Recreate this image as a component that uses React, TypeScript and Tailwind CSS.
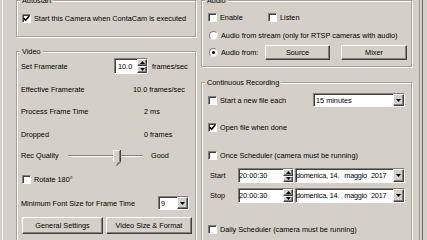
import React from 'react';

const sunken =
  'bg-white border border-t-[#808080] border-l-[#808080] border-b-white border-r-white shadow-[inset_1px_1px_0_#404040]';
const raised =
  'bg-[#d4d0c8] border border-t-white border-l-white border-r-[#404040] border-b-[#404040] shadow-[inset_-1px_-1px_0_#808080]';

const Arrow = ({ up }: { up?: boolean }) => (
  <svg width="5" height="3" viewBox="0 0 5 3">
    <path d={up ? 'M0 3h5L2.5 0z' : 'M0 0h5L2.5 3z'} fill="#000" />
  </svg>
);

const Group = ({ title, className, children }: { title: string; className?: string; children?: React.ReactNode }) => (
  <div className={`relative border border-[#a4a098] shadow-[inset_1px_1px_0_#fff,1px_1px_0_#fff] ${className ?? ''}`}>
    <span className="absolute -top-[6px] left-[3px] px-[2px] bg-[#d4d0c8] leading-[11px]">{title}</span>
    {children}
  </div>
);

const Check = ({ checked, label, className }: { checked?: boolean; label: string; className?: string }) => (
  <div className={`flex items-center gap-[3px] ${className ?? ''}`}>
    <span className={`shrink-0 w-[9px] h-[9px] flex items-center justify-center ${sunken}`}>
      {checked && (
        <svg width="7" height="7" viewBox="0 0 7 7">
          <path d="M0.8 3.2 L2.6 5.2 L6.2 1" stroke="#000" strokeWidth="1.6" fill="none" />
        </svg>
      )}
    </span>
    <span>{label}</span>
  </div>
);

const Radio = ({ checked, label, className }: { checked?: boolean; label: string; className?: string }) => (
  <div className={`flex items-center gap-[3px] ${className ?? ''}`}>
    <span className="shrink-0 w-[9px] h-[9px] rounded-full bg-white border border-t-[#808080] border-l-[#808080] border-b-[#e8e6e0] border-r-[#e8e6e0] flex items-center justify-center">
      {checked && <span className="w-[3px] h-[3px] rounded-full bg-black" />}
    </span>
    <span>{label}</span>
  </div>
);

const Btn = ({ label, className }: { label: string; className?: string }) => (
  <div className={`h-full flex items-center justify-center ${raised} ${className ?? ''}`}>{label}</div>
);

const Spin = ({ value, className, pad }: { value: string; className?: string; pad?: boolean }) => (
  <div className={`h-full flex ${sunken} ${className ?? ''}`}>
    <div className={`flex-1 flex items-center ${pad ? 'pl-[3px]' : ''}`}>{value}</div>
    <div className="w-[10px] flex flex-col">
      <div className={`flex-1 flex items-center justify-center ${raised}`}>
        <Arrow up />
      </div>
      <div className={`flex-1 flex items-center justify-center ${raised}`}>
        <Arrow />
      </div>
    </div>
  </div>
);

const Combo = ({ children, className }: { children: React.ReactNode; className?: string }) => (
  <div className={`h-full flex ${sunken} ${className ?? ''}`}>
    <div className="flex-1 flex items-center overflow-hidden">{children}</div>
    <div className={`w-[11px] flex items-center justify-center ${raised}`}>
      <Arrow />
    </div>
  </div>
);

const Slider = () => (
  <div className="relative w-[75px] h-full flex items-center">
    <div className="w-full h-[2px] border-t border-t-[#808080] border-b border-b-white" />
    <svg className="absolute left-[45px] top-[3px]" width="8" height="16" viewBox="0 0 8 16">
      <path d="M0.5 0.5H6.5V11.5L3.5 14.5L0.5 11.5Z" fill="#d4d0c8" />
      <path d="M0.5 11.5V0.5H6.5" stroke="#fff" fill="none" />
      <path d="M7.5 0V11.8L3.5 15.8" stroke="#404040" fill="none" />
      <path d="M6.5 1V11.3L3.5 14.3" stroke="#808080" fill="none" />
    </svg>
  </div>
);

export default function App() {
  return (
    <div className="w-[427px] h-[240px] overflow-hidden bg-[#d4d0c8] text-black text-[7.3px] leading-[11px] whitespace-nowrap font-['Liberation_Sans',Arial,sans-serif] flex">
      <div className="ml-[2px] w-[418px] h-[270px] border-l border-l-white border-r border-r-[#9a968e] flex pl-[13px] gap-[5px]">
        {/* left column */}
        <div className="w-[180px] flex flex-col">
          <Group title="Autostart" className="h-[37px]">
            <div className="mt-[11px] h-[12px] flex items-center pl-[5px]">
              <Check checked label="Start this Camera when ContaCam is executed" />
            </div>
          </Group>

          <Group title="Video" className="mt-[14px] flex-1 flex flex-col">
            <div className="mt-[6px] h-[16px] flex items-center pl-[4px]">
              <span className="w-[93px]">Set Framerate</span>
              <Spin value="10.0" pad className="w-[34px]" />
              <span className="ml-[4px]">frames/sec</span>
            </div>
            <div className="mt-[8px] h-[15px] flex items-center pl-[4px]">
              <span className="w-[112px]">Effective Framerate</span>
              <span>10.0 frames/sec</span>
            </div>
            <div className="mt-[7px] h-[14px] flex items-center pl-[4px]">
              <span className="w-[123px]">Process Frame Time</span>
              <span>2 ms</span>
            </div>
            <div className="mt-[9px] h-[14px] flex items-center pl-[4px]">
              <span className="w-[123px]">Dropped</span>
              <span>0 frames</span>
            </div>
            <div className="mt-[6px] h-[17px] flex items-center pl-[4px]">
              <span className="w-[47px]">Rec Quality</span>
              <Slider />
              <span className="ml-[8px]">Good</span>
            </div>
            <div className="mt-[9px] h-[12px] flex items-center pl-[5px]">
              <Check label="Rotate 180°" />
            </div>
            <div className="mt-[11px] h-[14px] flex items-center pl-[4px]">
              <span className="w-[137px]">Minimum Font Size for Frame Time</span>
              <Combo className="w-[31px]">
                <span className="pl-[2px]">9</span>
              </Combo>
            </div>
            <div className="mt-[7px] h-[17px] flex pl-[5px] gap-[3px]">
              <Btn label="General Settings" className="w-[81px]" />
              <Btn label="Video Size & Format" className="w-[86px]" />
            </div>
          </Group>
        </div>

        {/* right column */}
        <div className="w-[211px] flex flex-col">
          <Group title="Audio" className="h-[67px]">
            <div className="mt-[10px] h-[12px] flex items-center pl-[6px]">
              <Check label="Enable" className="w-[60px]" />
              <Check label="Listen" />
            </div>
            <div className="mt-[6px] h-[12px] flex items-center pl-[7px]">
              <Radio label="Audio from stream (only for RTSP cameras with audio)" />
            </div>
            <div className="mt-[4px] h-[15px] flex items-center pl-[7px]">
              <Radio checked label="Audio from:" className="w-[56px]" />
              <Btn label="Source" className="w-[65px]" />
              <Btn label="Mixer" className="ml-[11px] w-[66px]" />
            </div>
          </Group>

          <Group title="Continuous Recording" className="mt-[15px] flex-1 flex flex-col">
            <div className="mt-[10px] h-[14px] flex items-center pl-[6px]">
              <Check label="Start a new file each" className="w-[105px]" />
              <Combo className="w-[92px]">
                <span className="pl-[2px]">15 minutes</span>
              </Combo>
            </div>
            <div className="mt-[14px] h-[12px] flex items-center pl-[6px]">
              <Check checked label="Open file when done" />
            </div>
            <div className="mt-[16px] h-[12px] flex items-center pl-[6px]">
              <Check label="Once Scheduler (camera must be running)" />
            </div>
            {['Start', 'Stop'].map((l, i) => (
              <div key={l} className={`${i === 0 ? 'mt-[7px]' : 'mt-[5px]'} h-[15px] flex items-center pl-[8px]`}>
                <span className="w-[28px]">{l}</span>
                <Spin value="20:00:30" className="w-[56px]" />
                <Combo className="ml-[1px] w-[110px]">
                  <span className="tracking-[-0.2px]">domenica, 14.</span>
                  <span className="ml-[5px] tracking-[-0.2px]">maggio</span>
                  <span className="ml-[4px] tracking-[-0.2px]">2017</span>
                </Combo>
              </div>
            ))}
            <div className="mt-[20px] h-[12px] flex items-center pl-[6px]">
              <Check label="Daily Scheduler (camera must be running)" />
            </div>
          </Group>
        </div>
      </div>
      <div className="ml-[2px] w-px h-full bg-[#6e6b65]" />
    </div>
  );
}
